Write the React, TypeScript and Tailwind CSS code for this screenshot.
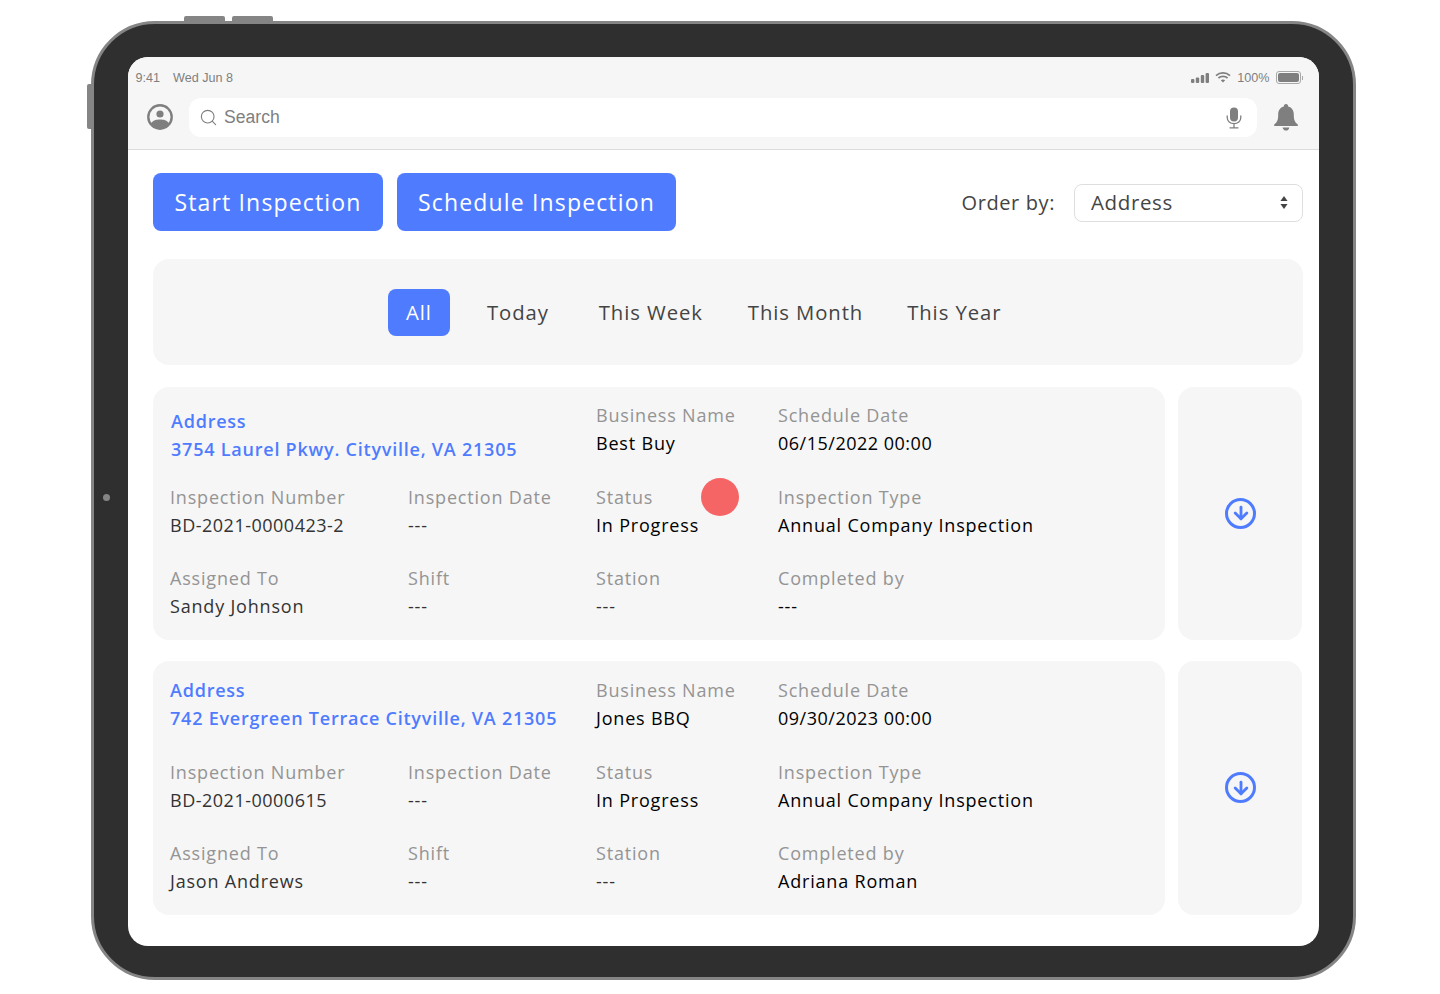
import React from 'react'
import { ArrowDown, Search } from 'lucide-react'

interface Inspection {
  address: string
  business: string
  schedule: string
  number: string
  assigned: string
  completedBy: string
  cardClass: string
  addressClass: string
}

const inspections: Inspection[] = [
  {
    address: '3754 Laurel Pkwy. Cityville, VA 21305',
    business: 'Best Buy',
    schedule: '06/15/2022 00:00',
    number: 'BD-2021-0000423-2',
    assigned: 'Sandy Johnson',
    completedBy: '---',
    cardClass: 'h-[253px] pt-[14px]',
    addressClass: 'pt-[6px] mb-[-6px] pl-[1px]'
  },
  {
    address: '742 Evergreen Terrace Cityville, VA 21305',
    business: 'Jones BBQ',
    schedule: '09/30/2023 00:00',
    number: 'BD-2021-0000615',
    assigned: 'Jason Andrews',
    completedBy: 'Adriana Roman',
    cardClass: 'h-[254px] pt-[15px]',
    addressClass: ''
  }
]

const Field = ({ label, value, dark = false, numeric = false }: { label: string; value: string; dark?: boolean; numeric?: boolean }) => (
  <div>
    <div className="h-[28px] text-[18px] leading-[28px] tracking-[0.045em] text-[#949494] whitespace-nowrap">{label}</div>
    <div
      className={`h-[28px] text-[18px] leading-[28px] whitespace-nowrap ${numeric ? 'tracking-[0.028em]' : 'tracking-[0.045em]'} ${dark ? 'text-[#000000]' : 'text-[#333333]'}`}
    >
      {value}
    </div>
  </div>
)

const InspectionCard = ({ item }: { item: Inspection }) => (
  <div className="flex gap-[13px]">
    <div className={`w-[1012px] rounded-[16px] bg-[#f6f6f6] pl-[17px] ${item.cardClass}`}>
      <div className="grid grid-cols-[238px_188px_182px_1fr] gap-y-[25.5px]">
        <div className={`col-span-2 text-[18px] font-semibold leading-[28px] tracking-[0.043em] text-[#4f7cff] whitespace-nowrap ${item.addressClass}`}>
          <div>Address</div>
          <div>{item.address}</div>
        </div>
        <Field label="Business Name" value={item.business} dark />
        <Field label="Schedule Date" value={item.schedule} dark numeric />
        <Field label="Inspection Number" value={item.number} numeric />
        <Field label="Inspection Date" value="---" />
        <Field label="Status" value="In Progress" dark />
        <Field label="Inspection Type" value="Annual Company Inspection" dark />
        <Field label="Assigned To" value={item.assigned} />
        <Field label="Shift" value="---" />
        <Field label="Station" value="---" />
        <Field label="Completed by" value={item.completedBy} dark />
      </div>
    </div>
    <div className="flex w-[124px] items-center justify-center rounded-[16px] bg-[#f6f6f6] pb-[1px] pl-[1px]">
      <div className="flex h-[31px] w-[31px] items-center justify-center rounded-full border-[3px] border-[#4f7cff]">
        <ArrowDown className="h-[20px] w-[20px] text-[#4f7cff]" strokeWidth={3.4} />
      </div>
    </div>
  </div>
)

const StatusBar = () => (
  <div className="flex h-[41px] items-center justify-between pl-[7.5px] pr-[16.5px] pt-[1px] text-[12.6px] text-[#7f7f7f]" style={{ fontFamily: '"Liberation Sans", sans-serif' }}>
    <div className="flex gap-[13px]">
      <span>9:41</span>
      <span>Wed Jun 8</span>
    </div>
    <div className="flex items-center gap-[6px]">
      <svg width="18" height="10" viewBox="0 0 18 10" fill="#7f7f7f">
        <rect x="0" y="6" width="3.4" height="4" rx="1" />
        <rect x="4.8" y="4.5" width="3.4" height="5.5" rx="1" />
        <rect x="9.8" y="2" width="3.4" height="8" rx="1" />
        <rect x="14.6" y="0" width="3.4" height="10" rx="1" />
      </svg>
      <svg width="16" height="11" viewBox="0 0 16 11" fill="none" stroke="#7f7f7f" strokeWidth="1.7">
        <path d="M1 3.6C5 0 11 0 15 3.6" />
        <path d="M3.4 6C6 3.8 10 3.8 12.6 6" />
        <path d="M8 10.6 5.8 8.2C7 7.2 9 7.2 10.2 8.2Z" fill="#7f7f7f" stroke="none" />
      </svg>
      <span>100%</span>
      <div className="flex items-center gap-[1px]">
        <div className="h-[13px] w-[25px] rounded-[3px] border border-[#a8a8a8] p-[1px]">
          <div className="h-full w-full rounded-[2px] bg-[#7f7f7f]" />
        </div>
        <div className="h-[4px] w-[1px] bg-[#a8a8a8]" />
      </div>
    </div>
  </div>
)

const SearchHeader = () => (
  <div className="flex h-[52px] items-start border-b border-[#dcdcdc] pl-[19px] pr-[20px]">
    <svg width="26" height="26" viewBox="0 0 26 26" className="mt-[6px]">
      <circle cx="13" cy="13" r="11.7" fill="none" stroke="#7f7f7f" strokeWidth="2.4" />
      <circle cx="13" cy="10" r="3.6" fill="#7f7f7f" />
      <path d="M3.8 20C6 16 9.5 15.6 13 15.6S20 16 22.2 20C20 23 16.5 24.6 13 24.6S6 23 3.8 20Z" fill="#7f7f7f" />
    </svg>
    <div className="ml-[16px] flex h-[39px] w-[1068px] items-center rounded-[12px] bg-white pl-[10px] pr-[15px]">
      <Search className="h-[19px] w-[19px] text-[#7f7f7f]" strokeWidth={1.4} />
      <span className="ml-[6px] text-[17.6px] text-[#7f7f7f]" style={{ fontFamily: '"Liberation Sans", sans-serif' }}>Search</span>
      <svg width="16" height="22" viewBox="0 0 16 22" className="ml-auto" fill="none">
        <rect x="4" y="0.5" width="8" height="14" rx="4" fill="#7f7f7f" />
        <path d="M1.2 9V10.5C1.2 14.2 4.2 16.6 8 16.6S14.8 14.2 14.8 10.5V9M8 16.6V20.5M4 20.8H12" stroke="#7f7f7f" strokeWidth="1.3" strokeLinecap="round" />
      </svg>
    </div>
    <svg width="24" height="27" viewBox="0 0 24 27" className="ml-[17px] mt-[6px]" fill="#7f7f7f">
      <path d="M12 0C13.4 0 14.2 1 14.2 2.4C18 3.4 19.8 6.4 19.8 10.5C19.8 15.5 20.6 18 23.8 20.6V22H0.2V20.6C3.4 18 4.2 15.5 4.2 10.5C4.2 6.4 6 3.4 9.8 2.4C9.8 1 10.6 0 12 0Z" />
      <path d="M8.6 23.4H15.4C15 25.4 13.7 26.6 12 26.6S9 25.4 8.6 23.4Z" />
    </svg>
  </div>
)

export default function App() {
  return (
    <div className="min-h-[994px] bg-white pl-[91px] pt-[21px]" style={{ fontFamily: '"Open Sans", sans-serif' }}>
      {/* 设备外壳 */}
      <div className="relative h-[959px] w-[1265px] rounded-[64px] border-[3px] border-[#858585] bg-[#2f2f2f] pl-[34px] pt-[33px]">
        <div className="absolute left-[90px] top-[-8px] h-[5px] w-[41px] rounded-t-[2px] bg-[#858585]" />
        <div className="absolute left-[138px] top-[-8px] h-[5px] w-[41px] rounded-t-[2px] bg-[#858585]" />
        <div className="absolute left-[-7px] top-[60px] h-[45px] w-[4px] rounded-l-[2px] bg-[#858585]" />
        <div className="absolute left-[9px] top-[470px] h-[7px] w-[7px] rounded-full bg-[#858585]" />

        <div className="relative h-[889px] w-[1191px] overflow-hidden rounded-[20px] bg-white">
          <div className="bg-[#f6f6f6]">
            <StatusBar />
            <SearchHeader />
          </div>

          <div className="pl-[25px] pr-[16px] pt-[23px]">
            <div className="flex items-start">
              <button className="h-[58px] w-[230px] rounded-[8px] bg-[#4f7cff] text-[23px] tracking-[0.05em] text-white">Start Inspection</button>
              <button className="ml-[14px] h-[58px] w-[279px] rounded-[8px] bg-[#4f7cff] text-[23px] tracking-[0.05em] text-white">Schedule Inspection</button>
              <span className="ml-auto mt-[11px] text-[20px] leading-[38px] tracking-[0.03em] text-[#444444]">Order by:</span>
              <div className="ml-[19px] mt-[11px] flex h-[38px] w-[229px] items-center justify-between rounded-[8px] border border-[#dedede] pl-[16px] pr-[14px] text-[20.5px] tracking-[0.03em] text-[#444444]">
                <span className="pb-[2px]">Address</span>
                <svg width="8" height="15" viewBox="0 0 9 15" fill="#444444" className="mb-[1px]" preserveAspectRatio="none">
                  <path d="M4.5 1 8.5 6H0.5Z" />
                  <path d="M4.5 14 0.5 9H8.5Z" />
                </svg>
              </div>
            </div>

            <div className="mt-[28px] flex h-[106px] items-center rounded-[16px] bg-[#f6f6f6] pl-[235px] text-[20.3px] tracking-[0.045em] text-[#444444]">
              <div className="flex h-[47px] w-[62px] items-center justify-center rounded-[8px] bg-[#4f7cff] pt-[1px] text-white">All</div>
              <span className="ml-[37px] pt-[1px]">Today</span>
              <span className="ml-[50px] pt-[1px]">This Week</span>
              <span className="ml-[45px] pt-[1px]">This Month</span>
              <span className="ml-[44px] pt-[1px]">This Year</span>
            </div>

            <div className="mt-[22px] flex flex-col gap-[21px]">
              {inspections.map((item) => (
                <InspectionCard key={item.number} item={item} />
              ))}
            </div>
          </div>

          <div className="absolute left-[573px] top-[421px] h-[38px] w-[38px] rounded-full bg-[#f56565]" />
        </div>
      </div>
    </div>
  )
}
